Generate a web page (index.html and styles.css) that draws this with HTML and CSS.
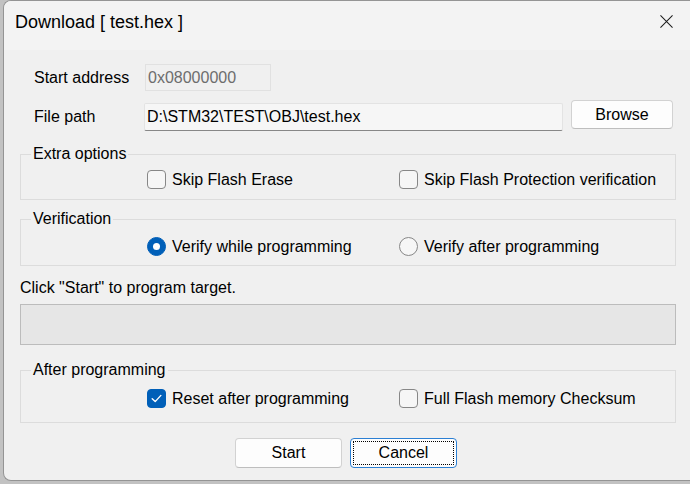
FILE: index.html
```html
<!DOCTYPE html>
<html>
<head>
<meta charset="utf-8">
<title>Download</title>
<link rel="stylesheet" href="styles.css">
</head>
<body>
<div class="window">
  <div class="titlebar">
    <span class="title">Download [ test.hex ]</span>
    <svg class="close" width="14" height="14" viewBox="0 0 14 14"><path d="M0.5 0.5 L13.5 13.5 M13.5 0.5 L0.5 13.5" stroke="#1b1b1b" stroke-width="1.1" fill="none"/></svg>
  </div>
  <div class="content">
    <div class="row row-addr">
      <span class="label label-addr">Start address</span>
      <div class="field field-disabled">0x08000000</div>
    </div>
    <div class="row row-path">
      <span class="label label-path">File path</span>
      <div class="field field-path">D:\STM32\TEST\OBJ\test.hex</div>
      <div class="btn btn-browse">Browse</div>
    </div>
    <fieldset class="group group-extra">
      <legend>Extra options</legend>
      <div class="opts">
        <div class="opt"><span class="check"></span><span>Skip Flash Erase</span></div>
        <div class="opt"><span class="check"></span><span>Skip Flash Protection verification</span></div>
      </div>
    </fieldset>
    <fieldset class="group group-verify">
      <legend>Verification</legend>
      <div class="opts">
        <div class="opt"><span class="radio radio-on"><span class="dot"></span></span><span>Verify while programming</span></div>
        <div class="opt"><span class="radio"></span><span>Verify after programming</span></div>
      </div>
    </fieldset>
    <div class="status">Click "Start" to program target.</div>
    <div class="progress"></div>
    <fieldset class="group group-after">
      <legend>After programming</legend>
      <div class="opts">
        <div class="opt"><span class="check check-on"><svg width="13" height="13" viewBox="0 0 13 13"><path d="M2.2 6.8 L5.2 9.6 L10.9 3.4" stroke="#ffffff" stroke-width="1.4" fill="none" stroke-linecap="round" stroke-linejoin="round"/></svg></span><span>Reset after programming</span></div>
        <div class="opt"><span class="check"></span><span>Full Flash memory Checksum</span></div>
      </div>
    </fieldset>
    <div class="buttons">
      <div class="btn btn-start">Start</div>
      <div class="btn btn-cancel">Cancel</div>
    </div>
  </div>
</div>
</body>
</html>
```
FILE: styles.css
```css
html, body {
  margin: 0;
  padding: 0;
  height: 100%;
}
body {
  background: #c2c2c2;
  overflow: hidden;
  font-family: "Liberation Sans", Arial, sans-serif;
  font-size: 16px;
  color: #000;
}
.window {
  margin-left: 3px;
  width: 690px;
  height: 481px;
  box-sizing: border-box;
  background: #f0f0f0;
  border: 1px solid #949494;
  border-right: none;
  border-radius: 8px 0 0 8px;
  display: flex;
  flex-direction: column;
  overflow: hidden;
}
.titlebar {
  height: 49px;
  flex: none;
  background: #f3f3f3;
  display: flex;
  align-items: flex-start;
  justify-content: space-between;
  padding: 11px 20px 0 11px;
  box-sizing: border-box;
}
.title {
  font-size: 18px;
  line-height: 20px;
  color: #000;
}
.close {
  margin-top: 3px;
  width: 13px;
  height: 13px;
}
.content {
  padding: 14px 17px 0 16px;
  display: flex;
  flex-direction: column;
}
.row {
  display: flex;
}
.row-addr {
  height: 27px;
  align-items: center;
}
.row-path {
  margin-top: 9px;
  align-items: flex-start;
}
.label {
  margin-left: 14px;
  line-height: 27px;
}
.label-addr {
  width: 111px;
}
.label-path {
  width: 110px;
  margin-top: 3px;
  line-height: 28px;
}
.field {
  box-sizing: border-box;
  padding-left: 2px;
  white-space: nowrap;
}
.field-disabled {
  width: 126px;
  height: 27px;
  line-height: 25px;
  border: 1px solid #e1e1e1;
  background: #f0f0f0;
  color: #6d6d6d;
}
.field-path {
  width: 419px;
  height: 28px;
  line-height: 26px;
  margin-top: 3px;
  border: 1px solid #e3e3e3;
  border-bottom-color: #878787;
  background: #f6f6f6;
  border-radius: 2px;
}
.btn {
  box-sizing: border-box;
  width: 102px;
  height: 29px;
  line-height: 27px;
  text-align: center;
  background: #fdfdfd;
  border: 1px solid #d2d2d2;
  border-bottom-color: #bebebe;
  border-radius: 4px;
}
.btn-browse {
  margin-left: 8px;
}
.group {
  margin: 0;
  min-width: 0;
  border: 1px solid #dcdcdc;
  padding: 7px 0 10px 0;
}
.group legend {
  margin-left: 10px;
  padding: 0 2px;
  line-height: 18px;
}
.group-extra {
  margin-top: 14px;
}
.group-verify {
  margin-top: 10px;
  padding-top: 9px;
  padding-bottom: 9px;
}
.group-after {
  margin-top: 16px;
  padding-top: 10px;
  padding-bottom: 14px;
}
.opts {
  display: grid;
  grid-template-columns: 252px auto;
  padding-left: 126px;
}
.opt {
  display: flex;
  align-items: center;
  gap: 6px;
  height: 19px;
  white-space: nowrap;
}
.check {
  box-sizing: border-box;
  width: 19px;
  height: 19px;
  border: 1px solid #878787;
  border-radius: 4px;
  background: #f6f6f6;
  display: flex;
  align-items: center;
  justify-content: center;
  flex: none;
}
.check-on {
  background: #005fb8;
  border-color: #005fb8;
}
.radio {
  box-sizing: border-box;
  width: 19px;
  height: 19px;
  border: 1px solid #878787;
  border-radius: 50%;
  background: #f6f6f6;
  display: flex;
  align-items: center;
  justify-content: center;
  flex: none;
}
.radio-on {
  background: #005fb8;
  border-color: #005fb8;
}
.dot {
  width: 7px;
  height: 7px;
  border-radius: 50%;
  background: #ffffff;
}
.status {
  margin-top: 13px;
  line-height: 18px;
}
.progress {
  margin-top: 7px;
  height: 41px;
  box-sizing: border-box;
  border: 1px solid #bcbcbc;
  background: #e6e6e6;
}
.buttons {
  display: flex;
  gap: 8px;
  margin-top: 15px;
  margin-left: 215px;
}
.btn-start, .btn-cancel {
  width: 107px;
  height: 30px;
  line-height: 28px;
}
.btn-cancel {
  border-color: #2c7fd3;
  outline: 1px dotted #000;
  outline-offset: -4px;
}
```
